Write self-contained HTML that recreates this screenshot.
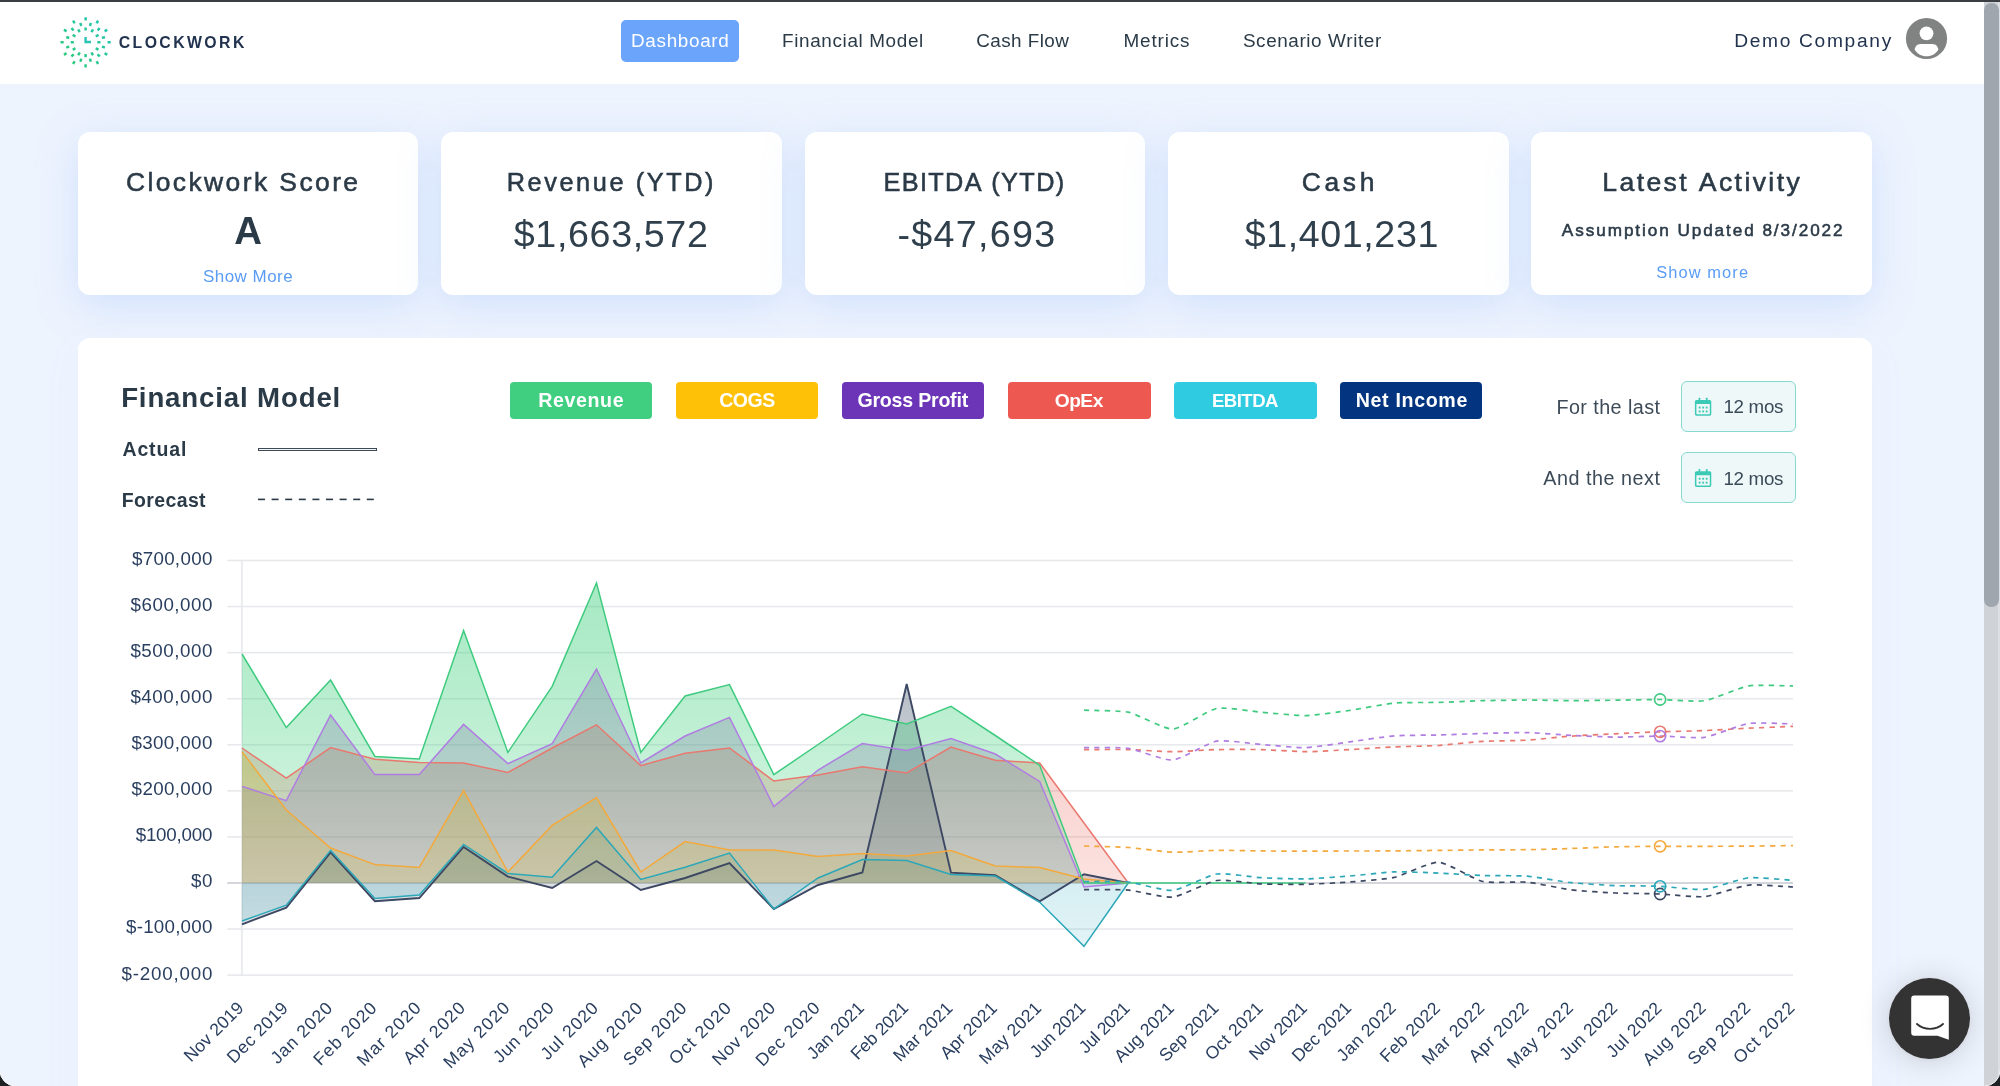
<!DOCTYPE html>
<html lang="en"><head><meta charset="utf-8"><title>Clockwork Dashboard</title>
<style>
html,body{margin:0;padding:0}
body{width:2000px;height:1086px;overflow:hidden;position:relative;background:#eef4fe;font-family:"Liberation Sans",sans-serif;font-kerning:none}
.page{position:absolute;left:0;top:0;width:2000px;height:1086px;overflow:hidden;will-change:transform}
.abs{position:absolute}
.t{position:absolute;white-space:nowrap;line-height:1;font-kerning:none}
.topline{position:absolute;left:0;top:0;width:2000px;height:1.6px;background:#3b3e43;z-index:5}
.header{position:absolute;left:0;top:0;width:1984px;height:84px;background:#fff}
.navbtn{position:absolute;left:620.8px;top:20.4px;width:118.2px;height:42px;border-radius:5px;background:#6aa4fb}
.card{position:absolute;background:#fff;border-radius:12px;box-shadow:0 10px 40px rgba(150,185,250,0.34)}
.card.big{border-radius:12px 12px 0 0;box-shadow:0 10px 40px rgba(150,185,250,0.05)}
.leg{position:absolute;top:381.8px;width:142.3px;height:37px;border-radius:4px}
.sel{position:absolute;width:114.4px;height:50.8px;box-sizing:border-box;border:1.3px solid #86d9cf;border-radius:6px;background:#eef8f9}
.sbtrack{position:absolute;left:1984px;top:0;width:16px;height:1086px;background:#cfd3d8}
.sbedge{position:absolute;left:1998.4px;top:0;width:1.6px;height:1086px;background:#dcdfe3}
.sbthumb{position:absolute;left:1984.3px;top:2.5px;width:14.4px;height:604.3px;border-radius:7.2px;background:#9fa6ad}
</style></head>
<body>
<div class="page">
<div class="topline"></div>
<div class="header"></div>
<svg class="abs" style="left:50px;top:8px" width="72" height="70" viewBox="50 8 72 70"><rect x="-1.60" y="-1.25" width="3.2" height="2.5" rx="0.4" fill="#28c6a7" transform="translate(109.10 42.30) rotate(0)"/><rect x="-1.60" y="-1.25" width="3.2" height="2.5" rx="0.4" fill="#27c5ae" transform="translate(105.95 30.55) rotate(-30)"/><rect x="-1.60" y="-1.25" width="3.2" height="2.5" rx="0.4" fill="#27c5ae" transform="translate(97.35 21.95) rotate(-60)"/><rect x="-1.60" y="-1.25" width="3.2" height="2.5" rx="0.4" fill="#28c6a7" transform="translate(85.60 18.80) rotate(-90)"/><rect x="-1.60" y="-1.25" width="3.2" height="2.5" rx="0.4" fill="#29c79c" transform="translate(73.85 21.95) rotate(-120)"/><rect x="-1.60" y="-1.25" width="3.2" height="2.5" rx="0.4" fill="#2bc98f" transform="translate(65.25 30.55) rotate(-150)"/><rect x="-1.60" y="-1.25" width="3.2" height="2.5" rx="0.4" fill="#2cca84" transform="translate(62.10 42.30) rotate(-180)"/><rect x="-1.60" y="-1.25" width="3.2" height="2.5" rx="0.4" fill="#2dcb7d" transform="translate(65.25 54.05) rotate(-210)"/><rect x="-1.60" y="-1.25" width="3.2" height="2.5" rx="0.4" fill="#2dcb7d" transform="translate(73.85 62.65) rotate(-240)"/><rect x="-1.60" y="-1.25" width="3.2" height="2.5" rx="0.4" fill="#2cca84" transform="translate(85.60 65.80) rotate(-270)"/><rect x="-1.60" y="-1.25" width="3.2" height="2.5" rx="0.4" fill="#2bc98f" transform="translate(97.35 62.65) rotate(-300)"/><rect x="-1.60" y="-1.25" width="3.2" height="2.5" rx="0.4" fill="#29c79c" transform="translate(105.95 54.05) rotate(-330)"/><rect x="-1.60" y="-1.25" width="3.2" height="2.5" rx="0.4" fill="#28c6a7" transform="translate(103.47 37.51) rotate(-15)"/><rect x="-1.60" y="-1.25" width="3.2" height="2.5" rx="0.4" fill="#28c6a9" transform="translate(98.68 29.22) rotate(-45)"/><rect x="-1.60" y="-1.25" width="3.2" height="2.5" rx="0.4" fill="#28c6a7" transform="translate(90.39 24.43) rotate(-75)"/><rect x="-1.60" y="-1.25" width="3.2" height="2.5" rx="0.4" fill="#29c79f" transform="translate(80.81 24.43) rotate(-105)"/><rect x="-1.60" y="-1.25" width="3.2" height="2.5" rx="0.4" fill="#2ac896" transform="translate(72.52 29.22) rotate(-135)"/><rect x="-1.60" y="-1.25" width="3.2" height="2.5" rx="0.4" fill="#2bc98c" transform="translate(67.73 37.51) rotate(-165)"/><rect x="-1.60" y="-1.25" width="3.2" height="2.5" rx="0.4" fill="#2cca84" transform="translate(67.73 47.09) rotate(-195)"/><rect x="-1.60" y="-1.25" width="3.2" height="2.5" rx="0.4" fill="#2cca82" transform="translate(72.52 55.38) rotate(-225)"/><rect x="-1.60" y="-1.25" width="3.2" height="2.5" rx="0.4" fill="#2cca84" transform="translate(80.81 60.17) rotate(-255)"/><rect x="-1.60" y="-1.25" width="3.2" height="2.5" rx="0.4" fill="#2bc98c" transform="translate(90.39 60.17) rotate(-285)"/><rect x="-1.60" y="-1.25" width="3.2" height="2.5" rx="0.4" fill="#2ac896" transform="translate(98.68 55.38) rotate(-315)"/><rect x="-1.60" y="-1.25" width="3.2" height="2.5" rx="0.4" fill="#29c79f" transform="translate(103.47 47.09) rotate(-345)"/><rect x="-1.60" y="-1.25" width="3.2" height="2.5" rx="0.4" fill="#29c7a0" transform="translate(98.90 42.30) rotate(0)"/><rect x="-1.60" y="-1.25" width="3.2" height="2.5" rx="0.4" fill="#28c6a3" transform="translate(97.12 35.65) rotate(-30)"/><rect x="-1.60" y="-1.25" width="3.2" height="2.5" rx="0.4" fill="#28c6a3" transform="translate(92.25 30.78) rotate(-60)"/><rect x="-1.60" y="-1.25" width="3.2" height="2.5" rx="0.4" fill="#29c7a0" transform="translate(85.60 29.00) rotate(-90)"/><rect x="-1.60" y="-1.25" width="3.2" height="2.5" rx="0.4" fill="#2ac899" transform="translate(78.95 30.78) rotate(-120)"/><rect x="-1.60" y="-1.25" width="3.2" height="2.5" rx="0.4" fill="#2ac892" transform="translate(74.08 35.65) rotate(-150)"/><rect x="-1.60" y="-1.25" width="3.2" height="2.5" rx="0.4" fill="#2bc98b" transform="translate(72.30 42.30) rotate(-180)"/><rect x="-1.60" y="-1.25" width="3.2" height="2.5" rx="0.4" fill="#2cca88" transform="translate(74.08 48.95) rotate(-210)"/><rect x="-1.60" y="-1.25" width="3.2" height="2.5" rx="0.4" fill="#2cca88" transform="translate(78.95 53.82) rotate(-240)"/><rect x="-1.60" y="-1.25" width="3.2" height="2.5" rx="0.4" fill="#2bc98b" transform="translate(85.60 55.60) rotate(-270)"/><rect x="-1.60" y="-1.25" width="3.2" height="2.5" rx="0.4" fill="#2ac892" transform="translate(92.25 53.82) rotate(-300)"/><rect x="-1.60" y="-1.25" width="3.2" height="2.5" rx="0.4" fill="#2ac899" transform="translate(97.12 48.95) rotate(-330)"/><path d="M84.4 36.9h2.4v3.9h4.2v2.4h-6.6z" fill="#2ac4b3"/></svg>
<span class="t" style="left:118.75px;top:35.00px;font-size:15.84px;letter-spacing:2.401px;color:#22334f;font-weight:700;">CLOCKWORK</span>
<div class="navbtn"></div>
<span class="t" style="left:631.05px;top:32.00px;font-size:18.90px;letter-spacing:0.666px;color:#ffffff;">Dashboard</span>
<span class="t" style="left:782.05px;top:32.00px;font-size:18.90px;letter-spacing:0.634px;color:#2a3a47;">Financial Model</span>
<span class="t" style="left:976.24px;top:32.00px;font-size:18.90px;letter-spacing:0.420px;color:#2a3a47;">Cash Flow</span>
<span class="t" style="left:1123.45px;top:32.00px;font-size:18.90px;letter-spacing:0.858px;color:#2a3a47;">Metrics</span>
<span class="t" style="left:1242.94px;top:32.00px;font-size:18.90px;letter-spacing:0.576px;color:#2a3a47;">Scenario Writer</span>
<span class="t" style="left:1734.13px;top:31.00px;font-size:19.19px;letter-spacing:1.681px;color:#22334f;">Demo Company</span>
<svg class="abs" style="left:1905px;top:17px" width="43" height="43" viewBox="-21.5 -21.5 43 43">
<circle cx="0" cy="0" r="20.6" fill="#808381"/>
<circle cx="0" cy="-5.2" r="6.9" fill="#fff"/>
<path d="M-6 5.5H6C9.5 5.5 11.8 8.6 11.8 11.2C9.6 15 5.2 17.7 0 17.7S-9.6 15 -11.8 11.2C-11.8 8.6 -9.5 5.5 -6 5.5Z" fill="#fff"/>
</svg>
<div class="card" style="left:77.8px;top:132px;width:340.7px;height:163px"></div>
<div class="card" style="left:441.2px;top:132px;width:340.7px;height:163px"></div>
<div class="card" style="left:804.8px;top:132px;width:340.7px;height:163px"></div>
<div class="card" style="left:1168.1px;top:132px;width:340.7px;height:163px"></div>
<div class="card" style="left:1531.4px;top:132px;width:340.7px;height:163px"></div>
<span class="t" style="left:125.96px;top:169.00px;font-size:26.45px;letter-spacing:2.412px;color:#2b3a47;-webkit-text-stroke:0.55px;">Clockwork Score</span>
<span class="t" style="left:506.63px;top:170.00px;font-size:25.29px;letter-spacing:2.604px;color:#2b3a47;-webkit-text-stroke:0.55px;">Revenue (YTD)</span>
<span class="t" style="left:883.43px;top:170.00px;font-size:25.29px;letter-spacing:1.368px;color:#2b3a47;-webkit-text-stroke:0.55px;">EBITDA (YTD)</span>
<span class="t" style="left:1301.76px;top:169.00px;font-size:26.45px;letter-spacing:3.635px;color:#2b3a47;-webkit-text-stroke:0.55px;">Cash</span>
<span class="t" style="left:1602.32px;top:169.00px;font-size:26.60px;letter-spacing:2.382px;color:#2b3a47;-webkit-text-stroke:0.55px;">Latest Activity</span>
<span class="t" style="left:513.80px;top:216.00px;font-size:37.65px;letter-spacing:0.632px;color:#2f3f4c;">$1,663,572</span>
<span class="t" style="left:897.53px;top:216.00px;font-size:37.65px;letter-spacing:1.287px;color:#2f3f4c;">-$47,693</span>
<span class="t" style="left:1244.80px;top:216.00px;font-size:37.65px;letter-spacing:0.570px;color:#2f3f4c;">$1,401,231</span>
<span class="t" style="left:234.24px;top:212.00px;font-size:38.37px;letter-spacing:0.000px;color:#2b3a47;font-weight:700;">A</span>
<span class="t" style="left:203.03px;top:268.00px;font-size:17.01px;letter-spacing:0.452px;color:#5a9cf5;">Show More</span>
<span class="t" style="left:1656.25px;top:264.00px;font-size:16.42px;letter-spacing:1.101px;color:#5a9cf5;">Show more</span>
<span class="t" style="left:1561.87px;top:222.00px;font-size:17.15px;letter-spacing:1.929px;color:#2b3a47;-webkit-text-stroke:0.55px;">Assumption Updated 8/3/2022</span>
<div class="card big" style="left:77.8px;top:338px;width:1794.3px;height:800px"></div>
<span class="t" style="left:121.15px;top:384.00px;font-size:27.62px;letter-spacing:0.861px;color:#2b3a47;font-weight:700;">Financial Model</span>
<span class="t" style="left:122.51px;top:440.00px;font-size:19.48px;letter-spacing:0.868px;color:#2b3a47;font-weight:700;">Actual</span>
<span class="t" style="left:121.70px;top:491.00px;font-size:19.48px;letter-spacing:0.393px;color:#2b3a47;font-weight:700;">Forecast</span>
<div class="abs" style="left:258px;top:447.8px;width:119.2px;height:3.2px;box-sizing:border-box;border:1px solid #3d4a55;background:#f4f6f8"></div>
<div class="leg" style="left:510px;background:#40ce80"></div>
<span class="t" style="left:538.19px;top:391.00px;font-size:19.62px;letter-spacing:0.615px;color:#ffffff;font-weight:700;">Revenue</span>
<div class="leg" style="left:675.9px;background:#ffc107"></div>
<span class="t" style="left:719.20px;top:391.00px;font-size:19.55px;letter-spacing:-0.500px;color:#ffffff;font-weight:700;">COGS</span>
<div class="leg" style="left:842px;background:#6c35b7"></div>
<span class="t" style="left:857.45px;top:391.00px;font-size:19.62px;letter-spacing:-0.236px;color:#ffffff;font-weight:700;">Gross Profit</span>
<div class="leg" style="left:1008.25px;background:#ed5950"></div>
<span class="t" style="left:1054.71px;top:391.00px;font-size:19.21px;letter-spacing:-0.500px;color:#ffffff;font-weight:700;">OpEx</span>
<div class="leg" style="left:1174.25px;background:#2fcbe0"></div>
<span class="t" style="left:1212.01px;top:392.00px;font-size:18.53px;letter-spacing:-0.500px;color:#ffffff;font-weight:700;">EBITDA</span>
<div class="leg" style="left:1340px;background:#03347f"></div>
<span class="t" style="left:1355.69px;top:391.00px;font-size:19.62px;letter-spacing:0.663px;color:#ffffff;font-weight:700;">Net Income</span>
<span class="t" style="left:1556.38px;top:398.00px;font-size:19.77px;letter-spacing:0.435px;color:#3d4b58;">For the last</span>
<span class="t" style="left:1543.26px;top:469.00px;font-size:19.77px;letter-spacing:0.526px;color:#3d4b58;">And the next</span>
<div class="sel" style="left:1681.2px;top:381.4px"></div>
<div class="sel" style="left:1681.2px;top:452.3px"></div>
<span class="t" style="left:1723.47px;top:398.00px;font-size:18.75px;letter-spacing:-0.316px;color:#3a4a57;">12 mos</span>
<span class="t" style="left:1723.47px;top:470.00px;font-size:18.75px;letter-spacing:-0.316px;color:#3a4a57;">12 mos</span>
<svg class="abs" style="left:0;top:0" width="1984" height="1086" viewBox="0 0 1984 1086" font-family="&quot;Liberation Sans&quot;, sans-serif"><rect x="258.0" y="498.6" width="7" height="1.6" fill="#2b3a47"/><rect x="271.6" y="498.6" width="7" height="1.6" fill="#2b3a47"/><rect x="285.2" y="498.6" width="7" height="1.6" fill="#2b3a47"/><rect x="298.8" y="498.6" width="7" height="1.6" fill="#2b3a47"/><rect x="312.4" y="498.6" width="7" height="1.6" fill="#2b3a47"/><rect x="326.0" y="498.6" width="7" height="1.6" fill="#2b3a47"/><rect x="339.6" y="498.6" width="7" height="1.6" fill="#2b3a47"/><rect x="353.2" y="498.6" width="7" height="1.6" fill="#2b3a47"/><rect x="366.8" y="498.6" width="7" height="1.6" fill="#2b3a47"/><g transform="translate(1694.9 397.8)" fill="#3cc9b5"><path fill-rule="evenodd" d="M1.6 2.2H14.8A1.6 1.6 0 0 1 16.4 3.8V16.3A1.6 1.6 0 0 1 14.8 17.9H1.6A1.6 1.6 0 0 1 0 16.3V3.8A1.6 1.6 0 0 1 1.6 2.2ZM1.5 6.2V16.0A0.4 0.4 0 0 0 1.9 16.4H14.5A0.4 0.4 0 0 0 14.9 16.0V6.2Z"/><rect x="3.7" y="0" width="1.7" height="3.4" rx="0.5"/><rect x="11" y="0" width="1.7" height="3.4" rx="0.5"/><rect x="3.8" y="8.8" width="1.9" height="1.9"/><rect x="3.8" y="12.7" width="1.9" height="1.9"/><rect x="7.3" y="8.8" width="1.9" height="1.9"/><rect x="7.3" y="12.7" width="1.9" height="1.9"/><rect x="10.8" y="8.8" width="1.9" height="1.9"/><rect x="10.8" y="12.7" width="1.9" height="1.9"/></g><g transform="translate(1694.9 469.0)" fill="#3cc9b5"><path fill-rule="evenodd" d="M1.6 2.2H14.8A1.6 1.6 0 0 1 16.4 3.8V16.3A1.6 1.6 0 0 1 14.8 17.9H1.6A1.6 1.6 0 0 1 0 16.3V3.8A1.6 1.6 0 0 1 1.6 2.2ZM1.5 6.2V16.0A0.4 0.4 0 0 0 1.9 16.4H14.5A0.4 0.4 0 0 0 14.9 16.0V6.2Z"/><rect x="3.7" y="0" width="1.7" height="3.4" rx="0.5"/><rect x="11" y="0" width="1.7" height="3.4" rx="0.5"/><rect x="3.8" y="8.8" width="1.9" height="1.9"/><rect x="3.8" y="12.7" width="1.9" height="1.9"/><rect x="7.3" y="8.8" width="1.9" height="1.9"/><rect x="7.3" y="12.7" width="1.9" height="1.9"/><rect x="10.8" y="8.8" width="1.9" height="1.9"/><rect x="10.8" y="12.7" width="1.9" height="1.9"/></g><rect x="227.3" y="559.70" width="1565.7" height="1.6" fill="#e7e9ec"/><rect x="227.3" y="605.77" width="1565.7" height="1.6" fill="#e7e9ec"/><rect x="227.3" y="651.84" width="1565.7" height="1.6" fill="#e7e9ec"/><rect x="227.3" y="697.91" width="1565.7" height="1.6" fill="#e7e9ec"/><rect x="227.3" y="743.98" width="1565.7" height="1.6" fill="#e7e9ec"/><rect x="227.3" y="790.05" width="1565.7" height="1.6" fill="#e7e9ec"/><rect x="227.3" y="836.12" width="1565.7" height="1.6" fill="#e7e9ec"/><rect x="227.3" y="882.19" width="1565.7" height="1.6" fill="#e7e9ec"/><rect x="227.3" y="928.26" width="1565.7" height="1.6" fill="#e7e9ec"/><rect x="227.3" y="974.33" width="1565.7" height="1.6" fill="#e7e9ec"/><rect x="241.1" y="560" width="1.6" height="416" fill="#e6e8ec"/><rect x="227.3" y="882.20" width="1565.7" height="1.6" fill="#cfd2d6"/><defs><linearGradient id="g_rev" gradientUnits="userSpaceOnUse" x1="0" y1="560" x2="0" y2="975"><stop offset="0" stop-color="rgb(46,204,113)" stop-opacity="0.45"/><stop offset="1" stop-color="rgb(46,204,113)" stop-opacity="0.1"/></linearGradient><linearGradient id="g_cogs" gradientUnits="userSpaceOnUse" x1="0" y1="560" x2="0" y2="975"><stop offset="0" stop-color="rgb(248,172,18)" stop-opacity="0.45"/><stop offset="1" stop-color="rgb(248,172,18)" stop-opacity="0.1"/></linearGradient><linearGradient id="g_gp" gradientUnits="userSpaceOnUse" x1="0" y1="560" x2="0" y2="975"><stop offset="0" stop-color="rgb(155,89,182)" stop-opacity="0.45"/><stop offset="1" stop-color="rgb(155,89,182)" stop-opacity="0.1"/></linearGradient><linearGradient id="g_opex" gradientUnits="userSpaceOnUse" x1="0" y1="560" x2="0" y2="975"><stop offset="0" stop-color="rgb(233,92,78)" stop-opacity="0.45"/><stop offset="1" stop-color="rgb(233,92,78)" stop-opacity="0.1"/></linearGradient><linearGradient id="g_ebit" gradientUnits="userSpaceOnUse" x1="0" y1="560" x2="0" y2="975"><stop offset="0" stop-color="rgb(23,162,184)" stop-opacity="0.45"/><stop offset="1" stop-color="rgb(23,162,184)" stop-opacity="0.1"/></linearGradient><linearGradient id="g_ni" gradientUnits="userSpaceOnUse" x1="0" y1="560" x2="0" y2="975"><stop offset="0" stop-color="rgb(52,73,94)" stop-opacity="0.45"/><stop offset="1" stop-color="rgb(52,73,94)" stop-opacity="0.1"/></linearGradient></defs><polygon points="242.0,883.0 242.0,924.4 286.3,907.6 330.6,852.4 374.9,901.2 419.3,898.0 463.6,847.0 507.9,876.6 552.2,888.0 596.5,861.0 640.8,890.0 685.1,878.0 729.5,863.0 773.8,909.0 818.1,885.0 862.4,872.4 906.7,684.0 951.0,872.6 995.3,875.2 1039.7,901.4 1084.0,874.3 1128.3,883.0 1128.3,883.0" fill="url(#g_ni)"/><polygon points="242.0,883.0 242.0,921.0 286.3,905.2 330.6,850.4 374.9,898.4 419.3,895.0 463.6,844.4 507.9,873.4 552.2,877.2 596.5,827.4 640.8,879.4 685.1,867.3 729.5,853.0 773.8,909.0 818.1,878.0 862.4,859.6 906.7,860.6 951.0,874.4 995.3,876.0 1039.7,902.3 1084.0,946.4 1128.3,883.0 1128.3,883.0" fill="url(#g_ebit)"/><polygon points="242.0,883.0 242.0,748.0 286.3,778.2 330.6,747.6 374.9,759.2 419.3,762.4 463.6,763.0 507.9,772.5 552.2,748.0 596.5,724.8 640.8,765.6 685.1,753.3 729.5,748.0 773.8,781.0 818.1,775.0 862.4,766.8 906.7,773.0 951.0,747.0 995.3,760.3 1039.7,763.0 1084.0,823.0 1128.3,883.0 1128.3,883.0" fill="url(#g_opex)"/><polygon points="242.0,883.0 242.0,786.4 286.3,800.6 330.6,715.0 374.9,774.6 419.3,774.6 463.6,724.4 507.9,763.6 552.2,743.6 596.5,669.0 640.8,763.0 685.1,736.0 729.5,717.4 773.8,806.6 818.1,770.0 862.4,743.6 906.7,750.4 951.0,738.6 995.3,754.0 1039.7,781.4 1084.0,887.0 1128.3,883.0 1128.3,883.0" fill="url(#g_gp)"/><polygon points="242.0,883.0 242.0,751.6 286.3,810.0 330.6,848.0 374.9,864.6 419.3,867.4 463.6,790.6 507.9,872.0 552.2,825.4 596.5,797.6 640.8,872.0 685.1,841.6 729.5,850.0 773.8,850.0 818.1,856.6 862.4,853.4 906.7,856.0 951.0,850.6 995.3,866.0 1039.7,867.5 1084.0,879.0 1128.3,883.0 1128.3,883.0" fill="url(#g_cogs)"/><polygon points="242.0,883.0 242.0,654.0 286.3,727.6 330.6,680.0 374.9,756.4 419.3,759.0 463.6,630.4 507.9,752.4 552.2,686.4 596.5,583.0 640.8,752.4 685.1,696.0 729.5,684.6 773.8,774.6 818.1,744.5 862.4,714.0 906.7,724.0 951.0,706.4 995.3,735.5 1039.7,765.3 1084.0,883.0 1128.3,883.0 1172.6,883.0 1216.9,883.0 1261.2,883.0 1305.5,883.0 1305.5,883.0" fill="url(#g_rev)"/><polyline points="242.0,924.4 286.3,907.6 330.6,852.4 374.9,901.2 419.3,898.0 463.6,847.0 507.9,876.6 552.2,888.0 596.5,861.0 640.8,890.0 685.1,878.0 729.5,863.0 773.8,909.0 818.1,885.0 862.4,872.4 906.7,684.0 951.0,872.6 995.3,875.2 1039.7,901.4 1084.0,874.3 1128.3,883.0" fill="none" stroke="#3d4863" stroke-width="1.9" stroke-linejoin="miter"/><polyline points="242.0,921.0 286.3,905.2 330.6,850.4 374.9,898.4 419.3,895.0 463.6,844.4 507.9,873.4 552.2,877.2 596.5,827.4 640.8,879.4 685.1,867.3 729.5,853.0 773.8,909.0 818.1,878.0 862.4,859.6 906.7,860.6 951.0,874.4 995.3,876.0 1039.7,902.3 1084.0,946.4 1128.3,883.0" fill="none" stroke="#2ba7b8" stroke-width="1.5" stroke-linejoin="miter"/><polyline points="242.0,748.0 286.3,778.2 330.6,747.6 374.9,759.2 419.3,762.4 463.6,763.0 507.9,772.5 552.2,748.0 596.5,724.8 640.8,765.6 685.1,753.3 729.5,748.0 773.8,781.0 818.1,775.0 862.4,766.8 906.7,773.0 951.0,747.0 995.3,760.3 1039.7,763.0 1084.0,823.0 1128.3,883.0" fill="none" stroke="#e9786f" stroke-width="1.5" stroke-linejoin="miter"/><polyline points="242.0,786.4 286.3,800.6 330.6,715.0 374.9,774.6 419.3,774.6 463.6,724.4 507.9,763.6 552.2,743.6 596.5,669.0 640.8,763.0 685.1,736.0 729.5,717.4 773.8,806.6 818.1,770.0 862.4,743.6 906.7,750.4 951.0,738.6 995.3,754.0 1039.7,781.4 1084.0,887.0 1128.3,883.0" fill="none" stroke="#b07de2" stroke-width="1.5" stroke-linejoin="miter"/><polyline points="242.0,751.6 286.3,810.0 330.6,848.0 374.9,864.6 419.3,867.4 463.6,790.6 507.9,872.0 552.2,825.4 596.5,797.6 640.8,872.0 685.1,841.6 729.5,850.0 773.8,850.0 818.1,856.6 862.4,853.4 906.7,856.0 951.0,850.6 995.3,866.0 1039.7,867.5 1084.0,879.0 1128.3,883.0" fill="none" stroke="#f3a93c" stroke-width="1.5" stroke-linejoin="miter"/><polyline points="242.0,654.0 286.3,727.6 330.6,680.0 374.9,756.4 419.3,759.0 463.6,630.4 507.9,752.4 552.2,686.4 596.5,583.0 640.8,752.4 685.1,696.0 729.5,684.6 773.8,774.6 818.1,744.5 862.4,714.0 906.7,724.0 951.0,706.4 995.3,735.5 1039.7,765.3 1084.0,883.0 1128.3,883.0 1172.6,883.0 1216.9,883.0 1261.2,883.0 1305.5,883.0" fill="none" stroke="#3fcb7f" stroke-width="1.5" stroke-linejoin="miter"/><path d="M1084.0 889.6C1092.8 889.7 1119.5 889.4 1128.3 890.1C1137.2 890.9 1164.0 898.0 1172.6 897.1C1181.7 896.1 1207.8 881.9 1216.9 880.5C1225.5 879.2 1252.4 883.5 1261.2 883.9C1270.1 884.3 1296.7 884.5 1305.5 884.3C1314.4 884.1 1341.0 882.7 1349.9 882.0C1358.7 881.3 1385.5 879.3 1394.2 877.4C1403.3 875.4 1429.8 861.9 1438.5 862.3C1447.5 862.7 1473.6 879.4 1482.8 881.5C1491.3 883.4 1518.3 881.4 1527.1 882.2C1536.0 883.0 1562.5 888.8 1571.4 889.9C1580.2 891.0 1606.9 892.6 1615.7 893.0C1624.6 893.4 1651.2 893.6 1660.1 894.0C1668.9 894.4 1695.6 897.5 1704.4 896.6C1713.4 895.7 1739.7 886.1 1748.7 885.1C1757.4 884.2 1784.1 886.6 1793.0 887.0" fill="none" stroke="#3d4863" stroke-width="1.7" stroke-dasharray="5.2 5.2"/><path d="M1084.0 881.5C1092.8 881.6 1119.5 881.1 1128.3 882.0C1137.2 882.9 1163.9 891.2 1172.6 890.4C1181.7 889.6 1207.8 875.3 1216.9 874.0C1225.5 872.8 1252.4 877.2 1261.2 877.7C1270.1 878.2 1296.7 879.1 1305.5 878.9C1314.4 878.7 1341.0 876.7 1349.9 876.0C1358.7 875.3 1385.3 872.2 1394.2 871.9C1403.0 871.6 1429.6 872.7 1438.5 873.1C1447.4 873.5 1473.9 875.2 1482.8 875.5C1491.7 875.8 1518.3 875.5 1527.1 876.2C1536.0 876.9 1562.5 881.8 1571.4 882.7C1580.3 883.6 1606.9 885.2 1615.7 885.6C1624.6 886.0 1651.2 885.9 1660.1 886.3C1668.9 886.7 1695.6 890.2 1704.4 889.4C1713.4 888.5 1739.7 878.8 1748.7 877.9C1757.4 877.0 1784.1 879.8 1793.0 880.3" fill="none" stroke="#2ba7b8" stroke-width="1.7" stroke-dasharray="5.2 5.2"/><path d="M1084.0 749.6C1092.8 749.6 1119.4 749.4 1128.3 749.6C1137.2 749.8 1163.7 751.7 1172.6 751.7C1181.5 751.7 1208.0 749.8 1216.9 749.6C1225.8 749.4 1252.4 749.4 1261.2 749.6C1270.1 749.8 1296.7 751.7 1305.5 751.7C1314.4 751.7 1341.0 750.1 1349.9 749.6C1358.7 749.1 1385.3 747.3 1394.2 746.9C1403.0 746.5 1429.6 746.0 1438.5 745.5C1447.4 744.9 1473.9 741.9 1482.8 741.4C1491.6 740.9 1518.3 740.7 1527.1 740.2C1536.0 739.7 1562.6 736.7 1571.4 736.1C1580.3 735.5 1606.9 734.2 1615.7 733.8C1624.6 733.4 1651.2 732.1 1660.1 731.8C1668.9 731.5 1695.5 731.0 1704.4 730.6C1713.2 730.2 1739.8 728.6 1748.7 728.2C1757.5 727.8 1784.1 726.7 1793.0 726.3" fill="none" stroke="#e9786f" stroke-width="1.7" stroke-dasharray="5.2 5.2"/><path d="M1084.0 747.6C1092.8 747.7 1119.6 747.1 1128.3 748.3C1137.3 749.6 1164.0 760.7 1172.6 760.0C1181.7 759.3 1207.7 742.7 1216.9 741.1C1225.4 739.6 1252.4 743.8 1261.2 744.5C1270.1 745.1 1296.7 747.9 1305.5 747.6C1314.4 747.3 1341.0 743.1 1349.9 741.9C1358.7 740.7 1385.3 736.6 1394.2 735.9C1403.0 735.2 1429.6 735.2 1438.5 735.0C1447.4 734.8 1473.9 733.7 1482.8 733.5C1491.7 733.3 1518.3 732.4 1527.1 732.6C1536.0 732.8 1562.6 734.9 1571.4 735.4C1580.3 735.8 1606.9 737.0 1615.7 737.1C1624.6 737.2 1651.2 736.1 1660.1 736.1C1668.9 736.1 1695.7 738.5 1704.4 737.3C1713.4 736.0 1739.6 724.9 1748.7 723.5C1757.3 722.2 1784.1 723.8 1793.0 723.9" fill="none" stroke="#b07de2" stroke-width="1.7" stroke-dasharray="5.2 5.2"/><path d="M1084.0 846.0C1092.8 846.3 1119.4 846.9 1128.3 847.5C1137.2 848.1 1163.7 851.9 1172.6 852.2C1181.4 852.5 1208.0 850.5 1216.9 850.4C1225.8 850.3 1252.4 850.8 1261.2 850.9C1270.1 851.0 1296.7 851.2 1305.5 851.2C1314.4 851.2 1341.0 851.0 1349.9 851.0C1358.7 851.0 1385.3 851.0 1394.2 850.9C1403.0 850.8 1429.6 850.5 1438.5 850.4C1447.3 850.3 1473.9 850.0 1482.8 849.9C1491.7 849.8 1518.3 849.8 1527.1 849.7C1536.0 849.6 1562.6 848.8 1571.4 848.5C1580.3 848.2 1606.9 847.0 1615.7 846.8C1624.6 846.6 1651.2 846.4 1660.1 846.3C1668.9 846.3 1695.5 846.3 1704.4 846.3C1713.2 846.3 1739.8 846.2 1748.7 846.1C1757.5 846.0 1784.1 845.7 1793.0 845.6" fill="none" stroke="#f3a93c" stroke-width="1.7" stroke-dasharray="5.2 5.2"/><path d="M1084.0 710.2C1092.8 710.6 1119.7 710.4 1128.3 712.2C1137.4 714.1 1163.9 729.4 1172.6 729.0C1181.6 728.6 1207.6 710.2 1216.9 708.4C1225.4 706.8 1252.4 711.5 1261.2 712.2C1270.1 712.9 1296.7 715.8 1305.5 715.6C1314.4 715.4 1341.0 711.6 1349.9 710.4C1358.7 709.1 1385.2 703.9 1394.2 703.1C1403.0 702.3 1429.6 702.6 1438.5 702.4C1447.4 702.2 1473.9 700.9 1482.8 700.7C1491.7 700.5 1518.3 700.0 1527.1 700.0C1536.0 700.0 1562.6 700.7 1571.4 700.7C1580.3 700.7 1606.9 700.3 1615.7 700.2C1624.6 700.1 1651.2 699.5 1660.1 699.5C1668.9 699.6 1695.7 702.0 1704.4 700.7C1713.5 699.3 1739.6 687.4 1748.7 685.9C1757.3 684.5 1784.1 685.9 1793.0 685.9" fill="none" stroke="#3fcb7f" stroke-width="1.7" stroke-dasharray="5.2 5.2"/><circle cx="1660.1" cy="894.0" r="5.6" fill="none" stroke="#3d4863" stroke-width="1.6"/><circle cx="1660.1" cy="886.3" r="5.6" fill="none" stroke="#2ba7b8" stroke-width="1.6"/><circle cx="1660.1" cy="731.8" r="5.6" fill="none" stroke="#e9786f" stroke-width="1.6"/><circle cx="1660.1" cy="736.1" r="5.6" fill="none" stroke="#b07de2" stroke-width="1.6"/><circle cx="1660.1" cy="846.3" r="5.6" fill="none" stroke="#f3a93c" stroke-width="1.6"/><circle cx="1660.1" cy="699.5" r="5.6" fill="none" stroke="#3fcb7f" stroke-width="1.6"/><text transform="translate(244.8 1009.1) rotate(-45)" text-anchor="end" font-size="17.6" letter-spacing="0.09" fill="#2a3f5f">Nov 2019</text><text transform="translate(289.2 1009.0) rotate(-45)" text-anchor="end" font-size="17.6" letter-spacing="0.33" fill="#2a3f5f">Dec 2019</text><text transform="translate(334.0 1008.6) rotate(-45)" text-anchor="end" font-size="17.6" letter-spacing="0.89" fill="#2a3f5f">Jan 2020</text><text transform="translate(378.3 1008.6) rotate(-45)" text-anchor="end" font-size="17.6" letter-spacing="0.92" fill="#2a3f5f">Feb 2020</text><text transform="translate(422.7 1008.4) rotate(-45)" text-anchor="end" font-size="17.6" letter-spacing="1.08" fill="#2a3f5f">Mar 2020</text><text transform="translate(467.0 1008.4) rotate(-45)" text-anchor="end" font-size="17.6" letter-spacing="1.09" fill="#2a3f5f">Apr 2020</text><text transform="translate(511.4 1008.4) rotate(-45)" text-anchor="end" font-size="17.6" letter-spacing="1.10" fill="#2a3f5f">May 2020</text><text transform="translate(555.4 1008.7) rotate(-45)" text-anchor="end" font-size="17.6" letter-spacing="0.70" fill="#2a3f5f">Jun 2020</text><text transform="translate(599.8 1008.6) rotate(-45)" text-anchor="end" font-size="17.6" letter-spacing="0.90" fill="#2a3f5f">Jul 2020</text><text transform="translate(644.3 1008.4) rotate(-45)" text-anchor="end" font-size="17.6" letter-spacing="1.17" fill="#2a3f5f">Aug 2020</text><text transform="translate(688.4 1008.6) rotate(-45)" text-anchor="end" font-size="17.6" letter-spacing="0.86" fill="#2a3f5f">Sep 2020</text><text transform="translate(733.0 1008.4) rotate(-45)" text-anchor="end" font-size="17.6" letter-spacing="1.17" fill="#2a3f5f">Oct 2020</text><text transform="translate(777.1 1008.6) rotate(-45)" text-anchor="end" font-size="17.6" letter-spacing="0.83" fill="#2a3f5f">Nov 2020</text><text transform="translate(821.5 1008.5) rotate(-45)" text-anchor="end" font-size="17.6" letter-spacing="0.97" fill="#2a3f5f">Dec 2020</text><text transform="translate(865.1 1009.2) rotate(-45)" text-anchor="end" font-size="17.6" letter-spacing="-0.02" fill="#2a3f5f">Jan 2021</text><text transform="translate(909.3 1009.3) rotate(-45)" text-anchor="end" font-size="17.6" letter-spacing="-0.18" fill="#2a3f5f">Feb 2021</text><text transform="translate(953.8 1009.1) rotate(-45)" text-anchor="end" font-size="17.6" letter-spacing="0.17" fill="#2a3f5f">Mar 2021</text><text transform="translate(998.1 1009.2) rotate(-45)" text-anchor="end" font-size="17.6" letter-spacing="0.07" fill="#2a3f5f">Apr 2021</text><text transform="translate(1042.6 1009.0) rotate(-45)" text-anchor="end" font-size="17.6" letter-spacing="0.29" fill="#2a3f5f">May 2021</text><text transform="translate(1086.4 1009.4) rotate(-45)" text-anchor="end" font-size="17.6" letter-spacing="-0.32" fill="#2a3f5f">Jun 2021</text><text transform="translate(1130.7 1009.5) rotate(-45)" text-anchor="end" font-size="17.6" letter-spacing="-0.41" fill="#2a3f5f">Jul 2021</text><text transform="translate(1175.4 1009.1) rotate(-45)" text-anchor="end" font-size="17.6" letter-spacing="0.15" fill="#2a3f5f">Aug 2021</text><text transform="translate(1219.6 1009.2) rotate(-45)" text-anchor="end" font-size="17.6" letter-spacing="0.01" fill="#2a3f5f">Sep 2021</text><text transform="translate(1264.2 1009.0) rotate(-45)" text-anchor="end" font-size="17.6" letter-spacing="0.32" fill="#2a3f5f">Oct 2021</text><text transform="translate(1308.1 1009.4) rotate(-45)" text-anchor="end" font-size="17.6" letter-spacing="-0.23" fill="#2a3f5f">Nov 2021</text><text transform="translate(1352.6 1009.1) rotate(-45)" text-anchor="end" font-size="17.6" letter-spacing="0.08" fill="#2a3f5f">Dec 2021</text><text transform="translate(1397.1 1008.9) rotate(-45)" text-anchor="end" font-size="17.6" letter-spacing="0.39" fill="#2a3f5f">Jan 2022</text><text transform="translate(1441.4 1009.0) rotate(-45)" text-anchor="end" font-size="17.6" letter-spacing="0.31" fill="#2a3f5f">Feb 2022</text><text transform="translate(1486.1 1008.6) rotate(-45)" text-anchor="end" font-size="17.6" letter-spacing="0.81" fill="#2a3f5f">Mar 2022</text><text transform="translate(1530.3 1008.7) rotate(-45)" text-anchor="end" font-size="17.6" letter-spacing="0.71" fill="#2a3f5f">Apr 2022</text><text transform="translate(1574.9 1008.4) rotate(-45)" text-anchor="end" font-size="17.6" letter-spacing="1.08" fill="#2a3f5f">May 2022</text><text transform="translate(1618.6 1009.1) rotate(-45)" text-anchor="end" font-size="17.6" letter-spacing="0.18" fill="#2a3f5f">Jun 2022</text><text transform="translate(1663.1 1008.9) rotate(-45)" text-anchor="end" font-size="17.6" letter-spacing="0.44" fill="#2a3f5f">Jul 2022</text><text transform="translate(1707.6 1008.6) rotate(-45)" text-anchor="end" font-size="17.6" letter-spacing="0.81" fill="#2a3f5f">Aug 2022</text><text transform="translate(1751.9 1008.7) rotate(-45)" text-anchor="end" font-size="17.6" letter-spacing="0.67" fill="#2a3f5f">Sep 2022</text><text transform="translate(1796.4 1008.5) rotate(-45)" text-anchor="end" font-size="17.6" letter-spacing="0.98" fill="#2a3f5f">Oct 2022</text></svg>
<span class="t" style="left:131.90px;top:550.00px;font-size:18.75px;letter-spacing:0.318px;color:#2a3f5f;">$700,000</span>
<span class="t" style="left:130.60px;top:596.00px;font-size:18.75px;letter-spacing:0.504px;color:#2a3f5f;">$600,000</span>
<span class="t" style="left:130.40px;top:642.00px;font-size:18.75px;letter-spacing:0.533px;color:#2a3f5f;">$500,000</span>
<span class="t" style="left:130.40px;top:688.00px;font-size:18.75px;letter-spacing:0.533px;color:#2a3f5f;">$400,000</span>
<span class="t" style="left:131.40px;top:734.00px;font-size:18.75px;letter-spacing:0.390px;color:#2a3f5f;">$300,000</span>
<span class="t" style="left:131.60px;top:780.00px;font-size:18.75px;letter-spacing:0.361px;color:#2a3f5f;">$200,000</span>
<span class="t" style="left:135.70px;top:826.00px;font-size:18.75px;letter-spacing:-0.225px;color:#2a3f5f;">$100,000</span>
<span class="t" style="left:190.90px;top:872.00px;font-size:18.75px;letter-spacing:0.578px;color:#2a3f5f;">$0</span>
<span class="t" style="left:126.00px;top:918.00px;font-size:18.75px;letter-spacing:0.236px;color:#2a3f5f;">$-100,000</span>
<span class="t" style="left:121.40px;top:965.00px;font-size:18.75px;letter-spacing:0.811px;color:#2a3f5f;">$-200,000</span>
<div class="abs" style="left:1889px;top:977.5px;width:81px;height:81px;border-radius:50%;background:#333;box-shadow:0 1px 6px rgba(0,0,0,0.06),0 2px 32px rgba(0,0,0,0.16)"></div>
<svg class="abs" style="left:1885.5px;top:974px" width="88" height="88" viewBox="-44 -44 88 88">
<path d="M-15.8 -22.5H15.8A3 3 0 0 1 18.8 -19.5V21.8L7.5 17.8H-15.8A3 3 0 0 1 -18.8 14.8V-19.5A3 3 0 0 1 -15.8 -22.5Z" fill="#fff"/>
<path d="M-13 6C-6 12.5 6 12.5 13 6" fill="none" stroke="#333" stroke-width="1.9" stroke-linecap="round"/>
</svg>
<div class="sbtrack"></div><div class="sbedge"></div><div class="sbthumb"></div>
<svg class="abs" style="left:0;top:1066px" width="20" height="20" viewBox="0 1066 20 20"><path d="M0 1070.5A15.5 15.5 0 0 0 15.5 1086H0Z" fill="#1e2124"/><path d="M0 1070.5A15.5 15.5 0 0 0 15.5 1086" fill="none" stroke="#fbfcfe" stroke-width="1"/></svg>
<svg class="abs" style="left:1980px;top:1066px" width="20" height="20" viewBox="1980 1066 20 20"><path d="M2000 1070.5A15.5 15.5 0 0 1 1984.5 1086H2000Z" fill="#1e2124"/><path d="M2000 1070.5A15.5 15.5 0 0 1 1984.5 1086" fill="none" stroke="#f4f6f8" stroke-width="1"/></svg>
</div>
</body></html>
